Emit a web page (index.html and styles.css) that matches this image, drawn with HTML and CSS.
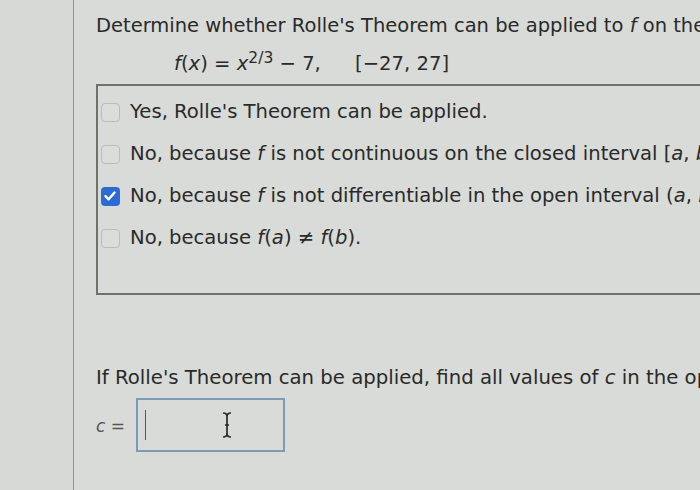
FILE: index.html
```html
<!DOCTYPE html>
<html>
<head>
<meta charset="utf-8">
<link rel="stylesheet" href="styles.css">
</head>
<body>
<div class="page">
  <div class="gutter"></div>
  <div class="content">
    <p class="question">Determine whether Rolle's Theorem can be applied to <i>f</i> on the closed interval [<i>a</i>, <i>b</i>].</p>
    <div class="formula"><i>f</i>(<i>x</i>) = <i>x</i><sup>2/3</sup> &minus; 7, <span class="interval">[&minus;27, 27]</span></div>
    <div class="choices">
      <div class="choice"><span class="box"></span><span>Yes, Rolle's Theorem can be applied.</span></div>
      <div class="choice"><span class="box"></span><span>No, because <i>f</i> is not continuous on the closed interval [<i>a</i>, <i>b</i>].</span></div>
      <div class="choice"><span class="box checked"><svg viewBox="0 0 18 18" width="18" height="18"><path d="M4.5 9.2 L7.6 12.3 L13.5 5.6" fill="none" stroke="#fff" stroke-width="2.4" stroke-linecap="round" stroke-linejoin="round"/></svg></span><span>No, because <i>f</i> is not differentiable in the open interval (<i>a</i>, <i>b</i>).</span></div>
      <div class="choice"><span class="box"></span><span>No, because <i>f</i>(<i>a</i>) &ne; <i>f</i>(<i>b</i>).</span></div>
    </div>
    <p class="followup">If Rolle's Theorem can be applied, find all values of <i>c</i> in the open interval (<i>a</i>, <i>b</i>) such that <i>f</i>&prime;(<i>c</i>) = 0.</p>
    <div class="answer">
      <span class="label"><i>c</i> =</span>
      <div class="input">
        <span class="caret"></span>
        <svg class="ibeam" viewBox="0 0 12 28" width="12" height="28"><path d="M2 2 Q6 2 6 5.5 Q6 2 10 2 M6 5.5 V22.5 M2 26 Q6 26 6 22.5 Q6 26 10 26 M4 14 H8" fill="none" stroke="#2a2a2a" stroke-width="1.7"/></svg>
      </div>
    </div>
  </div>
</div>
</body>
</html>
```
FILE: styles.css
```css
html, body {
  margin: 0;
  padding: 0;
  width: 700px;
  height: 490px;
  overflow: hidden;
  background: #d8dbd7;
}
.page {
  display: flex;
  height: 490px;
  font-family: "DejaVu Sans", Verdana, sans-serif;
  color: #2a2a2a;
}
.gutter {
  width: 73px;
  flex: none;
  border-right: 1px solid #949794;
  background: #d6d9d5;
}
.content {
  padding-left: 22px;
  white-space: nowrap;
}
.question {
  margin: 14px 0 0 0;
  font-size: 19.5px;
  line-height: 24px;
}
.formula {
  margin-top: 13px;
  padding-left: 78px;
  font-size: 19.6px;
  line-height: 26px;
}
.formula sup {
  font-size: 15.5px;
  vertical-align: 7px;
  line-height: 0;
}
.interval {
  margin-left: 28px;
}
.choices {
  margin-top: 7px;
  width: 700px;
  height: 211px;
  border: 2px solid #6c7468;
  border-right: none;
  padding-top: 13px;
  box-sizing: border-box;
  display: flex;
  flex-direction: column;
  gap: 16px;
}
.choice {
  display: flex;
  align-items: center;
  gap: 10px;
  padding-left: 3px;
  font-size: 19.6px;
  line-height: 26px;
}
.box {
  width: 17px;
  height: 17px;
  border: 1px solid #b9bcb8;
  border-radius: 4px;
  background: #dbddda;
  flex: none;
  display: flex;
}
.box.checked {
  width: 19px;
  height: 19px;
  border: none;
  background: #2d6bd4;
}
.followup {
  margin: 71px 0 0 0;
  font-size: 19.7px;
  line-height: 24px;
}
.answer {
  margin-top: 8px;
  display: flex;
  align-items: center;
  gap: 11px;
}
.label {
  font-size: 17px;
  color: #555;
  padding-top: 2px;
}
.input {
  width: 145px;
  height: 50px;
  border: 2px solid #7d9cb3;
  display: flex;
  align-items: center;
}
.caret {
  width: 1px;
  height: 30px;
  background: #555;
  margin-left: 7px;
}
.ibeam {
  margin-left: 75px;
}
```
